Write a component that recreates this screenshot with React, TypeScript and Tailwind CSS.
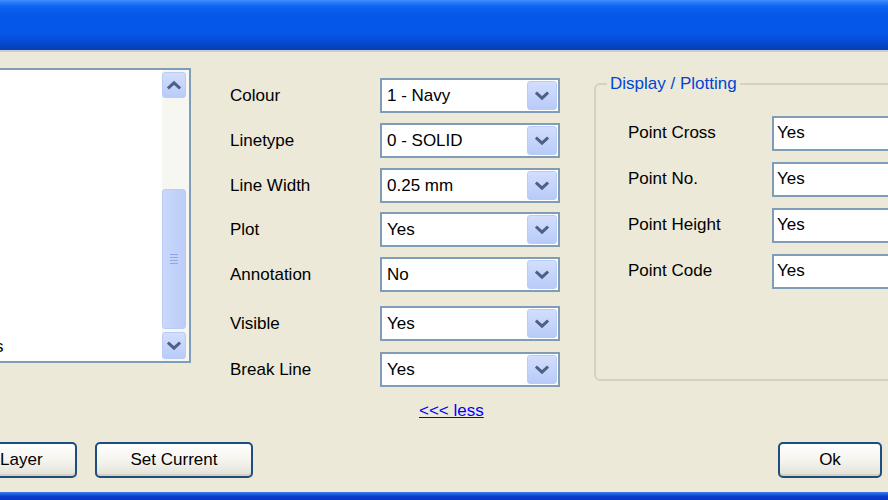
import React from "react";

const font = { fontFamily: '"Liberation Sans", Arial, sans-serif' };

const layerProps = [
  { label: "Colour", value: "1 - Navy", mt: "mt-0" },
  { label: "Linetype", value: "0 - SOLID", mt: "mt-[10px]" },
  { label: "Line Width", value: "0.25 mm", mt: "mt-[10px]" },
  { label: "Plot", value: "Yes", mt: "mt-[9px]" },
  { label: "Annotation", value: "No", mt: "mt-[10px]" },
  { label: "Visible", value: "Yes", mt: "mt-[14px]" },
  { label: "Break Line", value: "Yes", mt: "mt-[11px]" },
];

const displayProps = [
  { label: "Point Cross", value: "Yes" },
  { label: "Point No.", value: "Yes" },
  { label: "Point Height", value: "Yes" },
  { label: "Point Code", value: "Yes" },
];

function Chevron({ up = false }: { up?: boolean }) {
  return (
    <svg width="14" height="10" viewBox="0 0 14 10" className={up ? "rotate-180" : ""}>
      <path d="M2 2.5 L7 7.2 L12 2.5" fill="none" stroke="#4d6185" strokeWidth="3" strokeLinecap="square" />
    </svg>
  );
}

function ArrowButton({ up = false, className = "" }: { up?: boolean; className?: string }) {
  return (
    <div
      className={`flex shrink-0 items-center justify-center rounded-[3px] border border-[#b9cbf6] bg-gradient-to-b from-[#d3defd] to-[#b8cbf8] ${className}`}
    >
      <Chevron up={up} />
    </div>
  );
}

function Select({ value }: { value: string }) {
  return (
    <div className="flex h-[35px] w-[180px] shrink-0 items-center border-2 border-[#7f9db9] bg-white pl-[5px] pr-[1px]">
      <span className="flex-1 text-[17px] text-black">{value}</span>
      <ArrowButton className="h-[29px] w-[30px]" />
    </div>
  );
}

function XpButton({ children, className = "" }: { children: React.ReactNode; className?: string }) {
  return (
    <button
      className={`flex h-[36px] shrink-0 items-center justify-center rounded-[5px] border-2 border-[#1c4e80] bg-gradient-to-b from-white via-[#f5f4ef] to-[#e3e1d7] text-[17px] text-black shadow-[inset_0_-2px_0_#d6d0c0] ${className}`}
    >
      {children}
    </button>
  );
}

export default function App() {
  return (
    <div className="flex h-[500px] w-[888px] flex-col overflow-hidden bg-[#ece9d8]" style={font}>
      {/* title bar */}
      <div className="h-[50px] shrink-0 bg-[linear-gradient(to_bottom,#3f8dff_0px,#1064f2_6px,#0558ea_14px,#0656e6_34px,#0449cf_43px,#063fb8_48px)]" />
      <div className="h-[2px] shrink-0 bg-[#c6ccd8]" />

      <div className="flex flex-1 flex-col">
        <div className="flex items-start pt-[16px]">
          {/* layer list */}
          <div className="flex h-[295px] w-[191px] shrink-0 border-2 border-l-0 border-[#7f9db9] bg-white">
            <div className="flex flex-1 flex-col justify-end pb-[2px]">
              <span className="-ml-[5px] text-[17px] text-black">s</span>
            </div>
            <div className="flex w-[27px] flex-col bg-[#f7f7f2] py-[2px] pr-[2px]">
              <ArrowButton up className="h-[26px] w-[24px]" />
              <div className="h-[91px]" />
              <div className="flex h-[140px] w-[24px] items-center justify-center rounded-[3px] border border-[#b9cbf6] bg-gradient-to-r from-[#c9d8fc] to-[#bccdf8]">
                <div className="flex flex-col gap-[2px]">
                  <div className="h-px w-[8px] bg-[#8fa8e8]" />
                  <div className="h-px w-[8px] bg-[#8fa8e8]" />
                  <div className="h-px w-[8px] bg-[#8fa8e8]" />
                  <div className="h-px w-[8px] bg-[#8fa8e8]" />
                </div>
              </div>
              <div className="h-[3px]" />
              <ArrowButton className="h-[27px] w-[24px]" />
            </div>
          </div>

          {/* layer properties */}
          <div className="ml-[39px] mt-[10px] flex shrink-0 flex-col">
            {layerProps.map((p) => (
              <div key={p.label} className={`flex items-center ${p.mt}`}>
                <span className="w-[150px] text-[17px] text-black">{p.label}</span>
                <Select value={p.value} />
              </div>
            ))}
            <a className="ml-[189px] mt-[11px] text-[17px] text-[#0000ff] underline">&lt;&lt;&lt; less</a>
          </div>

          {/* display / plotting group */}
          <fieldset className="ml-[34px] mt-[3px] h-[310px] w-[330px] shrink-0 rounded-[6px] border-2 border-[#d5d2c2] pl-[32px]">
            <legend className="-ml-[21px] px-[3px] text-[17px] text-[#0046d5]">Display / Plotting</legend>
            <div className="mt-[19px] flex flex-col gap-[11px]">
              {displayProps.map((p) => (
                <div key={p.label} className="flex items-center">
                  <span className="w-[144px] text-[17px] text-black">{p.label}</span>
                  <div className="flex h-[35px] w-[150px] items-center border-2 border-[#7f9db9] bg-white pl-[3px] text-[17px] text-black">
                    {p.value}
                  </div>
                </div>
              ))}
            </div>
          </fieldset>
        </div>

        {/* buttons */}
        <div className="mt-auto flex items-center pb-[14px]">
          <XpButton className="-ml-[73px] w-[150px]">New Layer</XpButton>
          <XpButton className="ml-[18px] w-[158px]">Set Current</XpButton>
          <XpButton className="ml-[525px] w-[104px]">Ok</XpButton>
        </div>
      </div>

      {/* bottom frame */}
      <div className="h-[8px] shrink-0 bg-gradient-to-b from-[#3f7bea] via-[#0b3fd0] to-[#0a34c4]" />
    </div>
  );
}
